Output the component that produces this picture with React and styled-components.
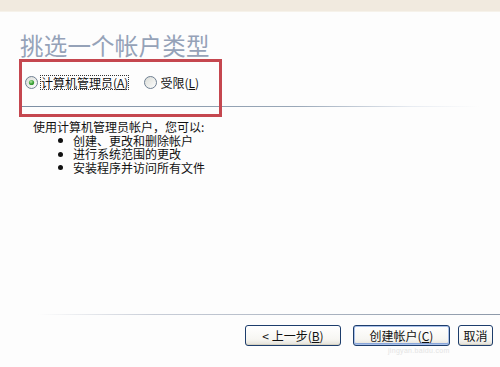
import React from "react";
import styled, { createGlobalStyle } from "styled-components";

const Global = createGlobalStyle`
  html, body { margin: 0; padding: 0; background: #fdfdfd; }
  body { font-family: "Noto Sans CJK SC", "Liberation Sans", sans-serif; }
`;

const Page = styled.div`
  position: relative;
  width: 500px;
  height: 367px;
  overflow: hidden;
  background: #fdfdfd;
  display: flex;
  flex-direction: column;
  color: #111;
  font-size: 12px;
`;

const TopBar = styled.div`
  height: 12px;
  background: #f1eadf;
  border-bottom: 1px solid #f6f2ea;
  box-sizing: border-box;
`;

const Title = styled.h1`
  margin: 20px 0 0 20px;
  font-weight: 400;
  font-size: 23.5px;
  line-height: 27px;
  color: #95a2b8;
  letter-spacing: 0.2px;
`;

const Options = styled.div`
  margin: 16px 0 0 25px;
  height: 15px;
  display: flex;
  align-items: center;
  gap: 15px;
`;

const Option = styled.label`
  display: flex;
  align-items: center;
  gap: 2px;
  line-height: 15px;
  font-size: 12px;
  white-space: nowrap;
`;

const OptionText = styled.span`
  padding: 0 1px;
  outline: ${(p) => (p.$focused ? "1px dotted #333" : "none")};
  outline-offset: -1px;
`;

const Key = styled.span`
  text-decoration: underline;
  text-underline-offset: 1px;
`;

const Rule = styled.div`
  height: 1px;
  margin: ${(p) => p.$margin};
  background: ${(p) => p.$bg};
`;

const Body = styled.div`
  margin: 13px 0 0 33px;
  font-size: 12px;
  line-height: 13.7px;
`;

const List = styled.ul`
  margin: 0;
  padding: 0 0 0 25px;
  list-style: none;
`;

const Item = styled.li`
  display: flex;
  align-items: center;
  gap: 10px;
  &::before {
    content: "";
    width: 5px;
    height: 5px;
    border-radius: 50%;
    background: #111;
  }
`;

const Spacer = styled.div`
  flex: 1;
`;

const Buttons = styled.div`
  margin: 10px 7px 21px 0;
  display: flex;
  justify-content: flex-end;
`;

const Button = styled.button`
  width: ${(p) => p.$w}px;
  margin-left: ${(p) => p.$ml}px;
  height: 21px;
  padding: 0;
  font-family: "Noto Sans CJK SC", "Liberation Sans", sans-serif;
  font-size: 12px;
  line-height: 15px;
  color: #111;
  border: 1px solid #1d3d6c;
  border-radius: 3px;
  background: linear-gradient(#ffffff, #f7f6f2 70%, #e2e0d8);
  box-shadow: ${(p) =>
    p.$default
      ? "inset 0 0 0 1px #a9c0e8, inset 0 -1px 0 1px #89a6da"
      : "inset 0 -1px 0 #d6d2c2"};
  white-space: nowrap;
`;

const RedBox = styled.div`
  position: absolute;
  left: 19px;
  top: 59px;
  width: 203px;
  height: 58px;
  box-sizing: border-box;
  border: 3px solid #c5474f;
  pointer-events: none;
`;

const Watermark = styled.div`
  position: absolute;
  left: 388px;
  top: 347px;
  font-family: "Liberation Sans", sans-serif;
  font-size: 7px;
  line-height: 8px;
  color: #e4e4e4;
  letter-spacing: 0.3px;
  pointer-events: none;
`;

function Radio({ checked }) {
  return (
    <svg width="13" height="13" viewBox="0 0 13 13">
      <defs>
        <linearGradient id="rg" x1="0" y1="0" x2="1" y2="1">
          <stop offset="0" stopColor="#d9dbd6" />
          <stop offset="1" stopColor="#ffffff" />
        </linearGradient>
        <radialGradient id="dot" cx="0.4" cy="0.35" r="0.7">
          <stop offset="0" stopColor="#b6e6a8" />
          <stop offset="0.6" stopColor="#3fa63a" />
          <stop offset="1" stopColor="#2c8a2a" />
        </radialGradient>
      </defs>
      <circle cx="6.5" cy="6.5" r="6" fill="url(#rg)" stroke="#6f7f92" strokeWidth="1" />
      {checked && <circle cx="6.5" cy="6.5" r="2.6" fill="url(#dot)" />}
    </svg>
  );
}

export default function App() {
  return (
    <>
      <Global />
      <Page>
        <TopBar />
        <Title>挑选一个帐户类型</Title>
        <Options>
          <Option>
            <Radio checked />
            <OptionText $focused>
              计算机管理员(<Key>A</Key>)
            </OptionText>
          </Option>
          <Option>
            <Radio />
            <OptionText>
              受限(<Key>L</Key>)
            </OptionText>
          </Option>
        </Options>
        <Rule
          $margin="16px 20px 0 22px"
          $bg="linear-gradient(to right, #7c8ea3 0%, #9aa8b8 60%, rgba(200,210,225,0.4) 85%, rgba(255,255,255,0) 100%)"
        />
        <Body>
          <div>使用计算机管理员帐户，您可以:</div>
          <List>
            <Item>创建、更改和删除帐户</Item>
            <Item>进行系统范围的更改</Item>
            <Item>安装程序并访问所有文件</Item>
          </List>
        </Body>
        <Spacer />
        <Rule
          $margin="0 0 0 38px"
          $bg="linear-gradient(to right, rgba(255,255,255,0) 0%, #c9ced8 25%, #a3adbb 70%, #8d99a9 100%)"
        />
        <Buttons>
          <Button $w={96} $ml={0}>
            &lt; 上一步(<Key>B</Key>)
          </Button>
          <Button $w={97} $ml={12} $default>
            创建帐户(<Key>C</Key>)
          </Button>
          <Button $w={35} $ml={8}>
            取消
          </Button>
        </Buttons>
        <RedBox />
        <Watermark>jingyan.baidu.com</Watermark>
      </Page>
    </>
  );
}
